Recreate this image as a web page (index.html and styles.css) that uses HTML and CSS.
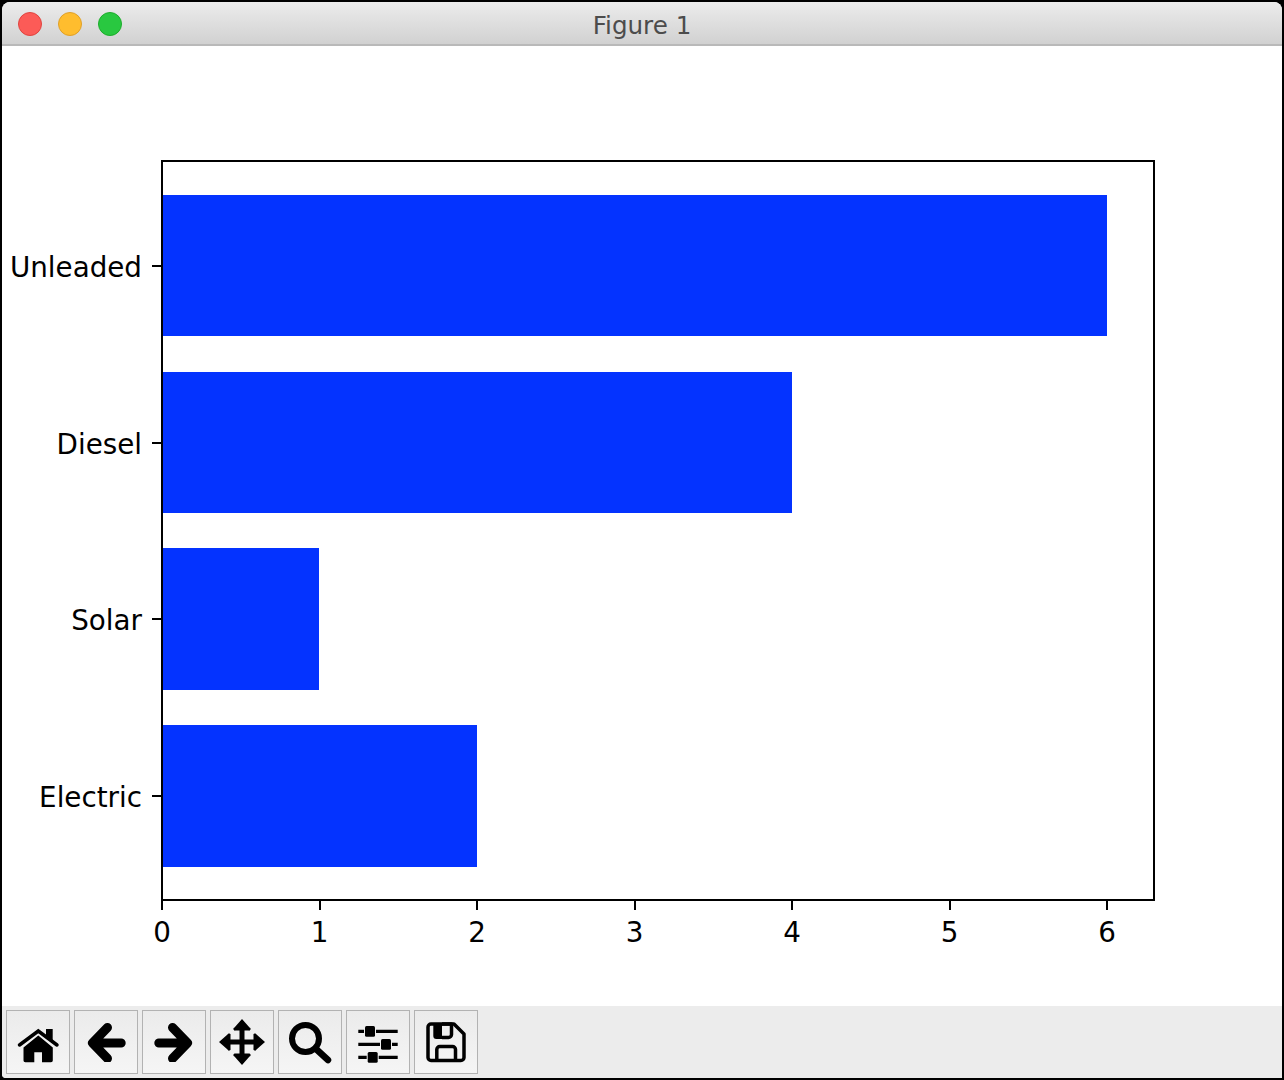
FILE: index.html
```html
<!DOCTYPE html>
<html lang="en">
<head>
<meta charset="utf-8">
<title>Figure 1</title>
<link rel="stylesheet" href="styles.css">
</head>
<body>
<div class="window">
  <header class="titlebar">
    <div class="lights">
      <span class="light red"></span>
      <span class="light yellow"></span>
      <span class="light green"></span>
    </div>
    <div class="title">Figure 1</div>
  </header>
  <main class="canvas">
    <div class="chart">
      <div class="ylabels">
        <div class="ylabel"><span>Unleaded</span><i class="ytick"></i></div>
        <div class="ylabel"><span>Diesel</span><i class="ytick"></i></div>
        <div class="ylabel"><span>Solar</span><i class="ytick"></i></div>
        <div class="ylabel"><span>Electric</span><i class="ytick"></i></div>
      </div>
      <div class="axes">
        <div class="bar" style="width:944px"></div>
        <div class="bar" style="width:629px"></div>
        <div class="bar" style="width:156px"></div>
        <div class="bar" style="width:314px"></div>
      </div>
      <div class="xaxis">
        <div class="xtick"><i></i><span>0</span></div>
        <div class="xtick"><i></i><span>1</span></div>
        <div class="xtick"><i></i><span>2</span></div>
        <div class="xtick"><i></i><span>3</span></div>
        <div class="xtick"><i></i><span>4</span></div>
        <div class="xtick"><i></i><span>5</span></div>
        <div class="xtick"><i></i><span>6</span></div>
      </div>
    </div>
  </main>
  <footer class="toolbar">
    <button class="tool" aria-label="Home"><svg viewBox="0 0 44 44" width="44" height="44"><path class="f" d="M22.300 15.500 L7.500 27.500 V40.500 a1.800 1.800 0 0 0 1.800 1.800 H18.300 V32.300 H26 V42.300 H35 a1.800 1.800 0 0 0 1.800-1.800 V27.500Z"/><path class="s" d="M3.500 25 L22.300 11 L41 25"/><path class="f" d="M30 9 H36.700 V21 L30 16Z"/></svg></button>
    <button class="tool" aria-label="Back"><svg viewBox="0 0 40 40" width="40" height="40"><path class="a" d="M21.500 5.500 L6.500 21 L21.500 36.500 M6.500 21 H35.200"/></svg></button>
    <button class="tool" aria-label="Forward"><svg viewBox="0 0 40 40" width="40" height="40"><path class="a" d="M18.500 5.500 L33.500 21 L18.500 36.500 M33.500 21 H4.800"/></svg></button>
    <button class="tool" aria-label="Pan"><svg viewBox="0 0 46 46" width="46" height="46"><path class="m" d="M23 6 V40 M6 23 H40"/><path class="f" d="M23 0 L30.500 8.500 a1.500 1.500 0 0 1-1 3 H16.500 a1.500 1.500 0 0 1-1-3Z M23 46 L30.500 37.500 a1.500 1.500 0 0 0-1-3 H16.500 a1.500 1.500 0 0 0-1 3Z M0 23 L8.500 15.500 a1.500 1.500 0 0 1 3 1 V29.500 a1.500 1.500 0 0 1-3 1Z M46 23 L37.500 15.500 a1.500 1.500 0 0 0-3 1 V29.500 a1.500 1.500 0 0 0 3 1Z"/></svg></button>
    <button class="tool" aria-label="Zoom"><svg viewBox="0 0 44 44" width="44" height="44"><circle class="g" cx="17.500" cy="18.500" r="13.500"/><path class="h" d="M27.500 28.500 L40 40"/></svg></button>
    <button class="tool" aria-label="Configure"><svg viewBox="0 0 42 44" width="42" height="44"><path class="t" d="M1.300 11.300 H7 M19 11.300 H40.700 M1.300 24.300 H23 M35 24.300 H40.700 M1.300 37.300 H9.700 M21.700 37.300 H40.700"/><rect x="8" y="6" width="10" height="10.700" rx="1.500"/><rect x="24" y="19" width="10" height="10.700" rx="1.500"/><rect x="10.700" y="32" width="10" height="10.700" rx="1.500"/></svg></button>
    <button class="tool" aria-label="Save"><svg viewBox="0 0 40 42" width="40" height="42"><path class="d" d="M5 3 H28 L38 13 V36.500 a3 3 0 0 1-3 3 H5 a3 3 0 0 1-3-3 V6 a3 3 0 0 1 3-3Z"/><path class="f" d="M7.300 3 H16 V18 H10.300 a3 3 0 0 1-3-3Z"/><path class="d" d="M16 3 H25.500 V13.500 a3 3 0 0 1-3 3 H16"/><path class="d" d="M10.800 39.500 V28.500 a3 3 0 0 1 3-3 H26.500 a3 3 0 0 1 3 3 V39.500"/></svg></button>
  </footer>
</div>
</body>
</html>
```
FILE: styles.css
```css
* { box-sizing: border-box; }
html, body { margin: 0; height: 100%; }
body { background: #000; padding: 2px; overflow: hidden; }
.window {
  width: 1280px;
  height: 1076px;
  display: flex;
  flex-direction: column;
  background: #fff;
  border-radius: 8px 8px 0 4px;
  overflow: hidden;
}
.titlebar {
  height: 44px;
  flex: none;
  display: flex;
  align-items: center;
  justify-content: center;
  position: relative;
  background: linear-gradient(#ececec, #d1d1d1);
  border-bottom: 2px solid #b9b9b9;
}
.lights {
  position: absolute;
  left: 16px;
  top: 10px;
  display: flex;
  gap: 16px;
}
.light {
  width: 24px;
  height: 24px;
  border-radius: 50%;
  border: 1px solid;
}
.red { background: #fc5b57; border-color: #e0443f; }
.yellow { background: #ffbd2e; border-color: #e0a028; }
.green { background: #29c840; border-color: #1dad2b; }
.title {
  font: 24.600px "DejaVu Sans", sans-serif;
  color: #4c4c4c;
  margin-top: 4px;
}
.canvas {
  flex: 1;
  background: #fff;
  padding-top: 114px;
}
.chart {
  display: grid;
  grid-template-columns: 159px 994px;
  grid-template-rows: 741px auto;
  font: 27.78px "DejaVu Sans", sans-serif;
  color: #000;
}
.ylabels {
  display: flex;
  flex-direction: column;
  padding: 35px 0 34px;
  gap: 35.500px;
}
.ylabel {
  flex: 1;
  display: flex;
  align-items: center;
  justify-content: flex-end;
  gap: 10px;
}
.ylabel span { margin-top: 3px; }
.ytick {
  width: 9px;
  height: 2px;
  background: #000;
  flex: none;
}
.axes {
  border: 2px solid #000;
  display: flex;
  flex-direction: column;
  padding-top: 33px;
  gap: 35px;
}
.bar {
  height: 141px;
  flex: none;
  background: #0433ff;
}
.bar:nth-child(2) { margin-top: 1px; }
.bar:nth-child(n+3) { height: 142px; }
.xaxis {
  grid-column: 2;
  display: flex;
  justify-content: space-between;
  width: 947px;
  margin-top: -1px;
}
.xtick {
  width: 2px;
  display: flex;
  flex-direction: column;
  align-items: center;
}
.xtick i {
  width: 2px;
  height: 10px;
  background: #000;
  flex: none;
}
.xtick span { line-height: 32px; margin-top: 7px; }
.toolbar {
  height: 72px;
  flex: none;
  display: flex;
  gap: 4px;
  padding: 4px;
  background: #ececec;
}
.tool {
  width: 64px;
  height: 64px;
  padding: 0;
  display: flex;
  align-items: center;
  justify-content: center;
  border: 1px solid #b2b2b2;
  background: linear-gradient(#ebebeb, #f5f5f5);
}
.f { fill: #000; }
.s { fill: none; stroke: #000; stroke-width: 3.500px; stroke-linecap: round; stroke-linejoin: miter; }
.a { fill: none; stroke: #000; stroke-width: 9px; stroke-linecap: round; stroke-linejoin: round; }
.m { fill: none; stroke: #000; stroke-width: 5px; }
.g { fill: none; stroke: #000; stroke-width: 6px; }
.h { fill: none; stroke: #000; stroke-width: 6.500px; stroke-linecap: round; }
.t { fill: none; stroke: #000; stroke-width: 3.300px; }
.d { fill: none; stroke: #000; stroke-width: 3.500px; stroke-linejoin: round; }
```
